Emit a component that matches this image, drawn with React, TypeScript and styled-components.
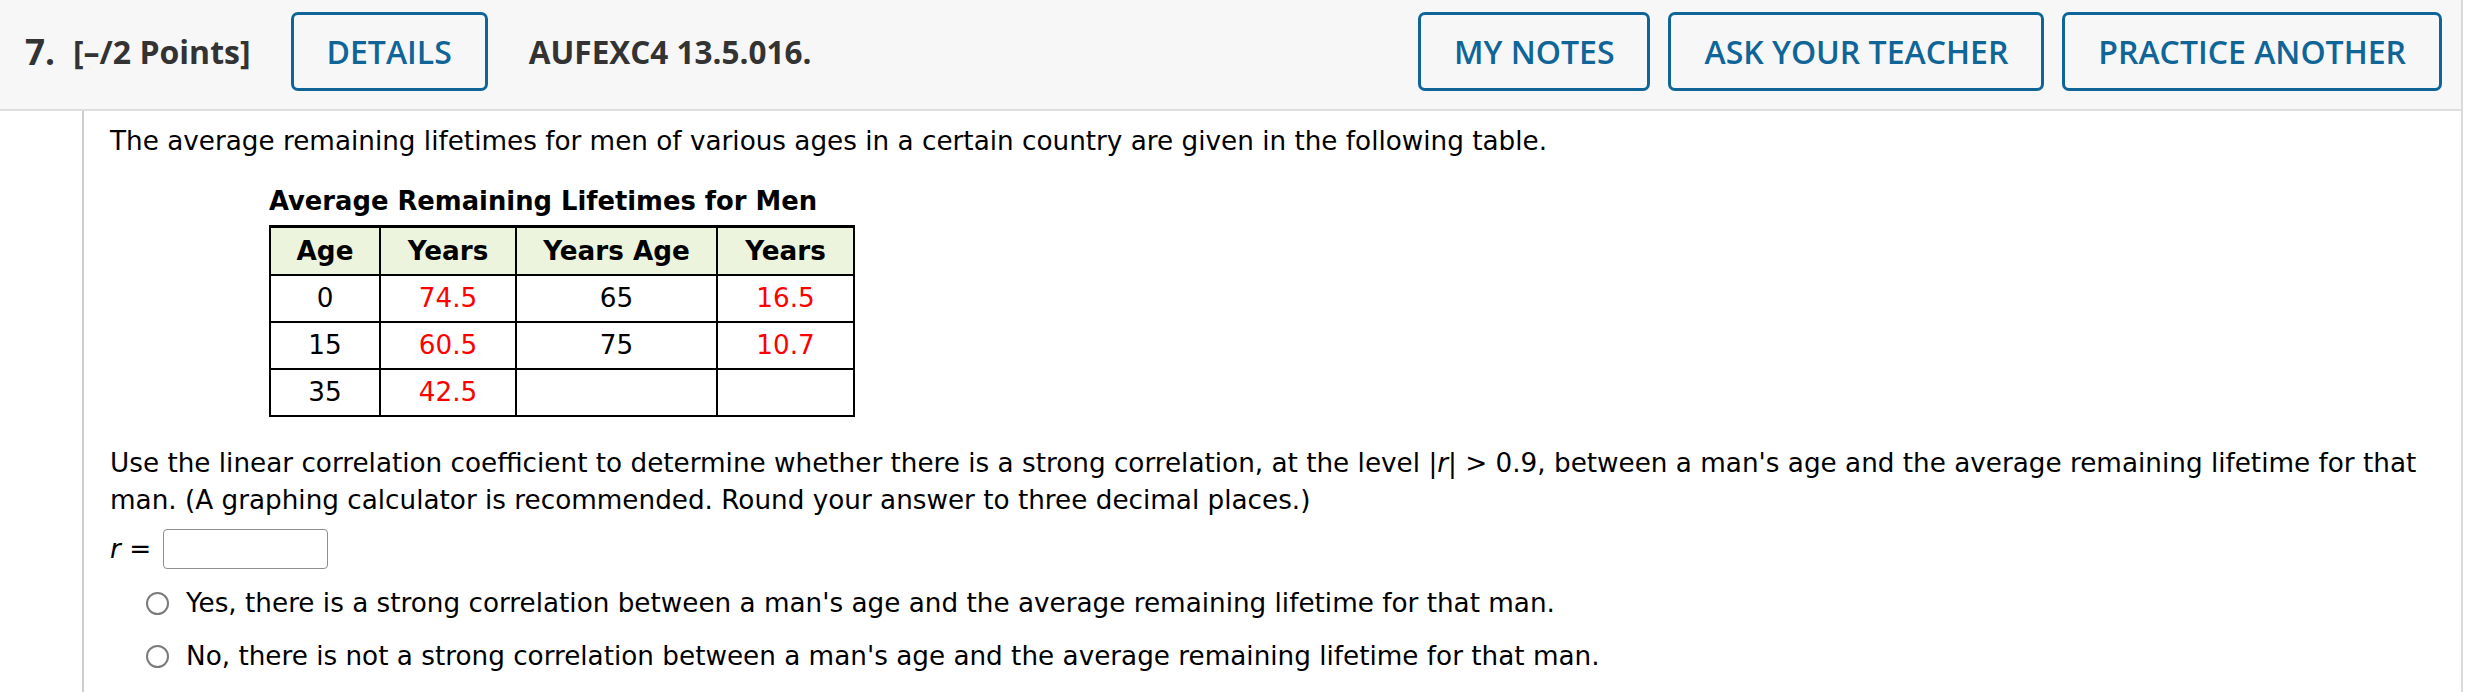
import styled, { createGlobalStyle } from "styled-components";

const GlobalStyle = createGlobalStyle`
  html, body {
    margin: 0;
    padding: 0;
    background: #ffffff;
  }
  body {
    font-family: "DejaVu Sans", Verdana, sans-serif;
  }
`;

const Question = styled.section`
  width: 2463px;
  height: 692px;
  box-sizing: border-box;
  border-right: 2px solid #dadada;
  display: flex;
  flex-direction: column;
`;

const Header = styled.header`
  height: 111px;
  box-sizing: border-box;
  padding: 12px 19px 0 25px;
  display: flex;
  align-items: flex-start;
  background: #f7f7f7;
  border-bottom: 2px solid #dedede;
  font-family: "Open Sans", sans-serif;
  color: #333333;
`;

const Number = styled.span`
  font-size: 35px;
  font-weight: 700;
  line-height: 79px;
  margin-right: 18px;
`;

const Points = styled.span`
  font-size: 32px;
  font-weight: 700;
  line-height: 79px;
  margin-right: 40px;
`;

const Code = styled.span`
  font-size: 31.5px;
  font-weight: 700;
  line-height: 79px;
  margin-left: 41px;
`;

const Actions = styled.div`
  margin-left: auto;
  display: flex;
  gap: 18px;
`;

const HeaderButton = styled.button`
  height: 79px;
  padding: 0 33px;
  border: 3px solid #0f6597;
  border-radius: 7px;
  background: transparent;
  color: #0f6597;
  font-family: "Open Sans", sans-serif;
  font-size: 32px;
  font-weight: 600;
  white-space: nowrap;
`;

const Body = styled.div`
  flex: 1;
  margin-left: 82px;
  border-left: 2px solid #cdcdcd;
  padding: 12px 20px 0 26px;
  font-size: 26.25px;
  line-height: 37px;
  color: #000000;
`;

const Text = styled.p`
  margin: 0;
`;

const Caption = styled.div`
  margin: 23px 0 5px 159px;
  font-size: 25.8px;
  font-weight: 700;
`;

const DataTable = styled.table`
  margin-left: 159px;
  width: 580px;
  table-layout: fixed;
  border-collapse: collapse;
  border: 2px solid #000000;
  border-top-width: 3px;
`;

const HeadCell = styled.th<{ $width: number }>`
  width: ${(p) => p.$width}px;
  height: 46px;
  padding: 0;
  border: 2px solid #000000;
  background: #ecf4de;
  font-weight: 700;
  text-align: center;
`;

const Cell = styled.td<{ $red?: boolean }>`
  height: 45px;
  padding: 0;
  border: 2px solid #000000;
  text-align: center;
  color: ${(p) => (p.$red ? "#ff0000" : "#000000")};
`;

const Prompt = styled(Text)`
  margin-top: 28px;
`;

const AnswerRow = styled.div`
  margin-top: 10px;
  display: flex;
  align-items: center;
  gap: 12px;
`;

const Var = styled.i`
  font-style: italic;
`;

const AnswerBox = styled.input`
  width: 165px;
  height: 40px;
  box-sizing: border-box;
  border: 1.5px solid #8e8e8e;
  border-radius: 4px;
  background: #ffffff;
`;

const Choice = styled.label`
  margin: 16px 0 0 36px;
  display: flex;
  align-items: center;
  gap: 17px;
`;

const Radio = styled.input`
  appearance: none;
  width: 23px;
  height: 23px;
  margin: 0;
  border: 2px solid #7b7b7b;
  border-radius: 50%;
  background: #ffffff;
`;

const columns = [
  { label: "Age", width: 108 },
  { label: "Years", width: 134 },
  { label: "Years Age", width: 199 },
  { label: "Years", width: 135 },
];

const rows = [
  ["0", "74.5", "65", "16.5"],
  ["15", "60.5", "75", "10.7"],
  ["35", "42.5", "", ""],
];

const choices = [
  "Yes, there is a strong correlation between a man's age and the average remaining lifetime for that man.",
  "No, there is not a strong correlation between a man's age and the average remaining lifetime for that man.",
];

export default function App() {
  return (
    <>
      <GlobalStyle />
      <Question>
        <Header>
          <Number>7.</Number>
          <Points>[–/2 Points]</Points>
          <HeaderButton>DETAILS</HeaderButton>
          <Code>AUFEXC4 13.5.016.</Code>
          <Actions>
            <HeaderButton>MY NOTES</HeaderButton>
            <HeaderButton>ASK YOUR TEACHER</HeaderButton>
            <HeaderButton>PRACTICE ANOTHER</HeaderButton>
          </Actions>
        </Header>
        <Body>
          <Text>
            The average remaining lifetimes for men of various ages in a certain country are
            given in the following table.
          </Text>
          <Caption>Average Remaining Lifetimes for Men</Caption>
          <DataTable>
            <thead>
              <tr>
                {columns.map((c, i) => (
                  <HeadCell key={i} $width={c.width}>
                    {c.label}
                  </HeadCell>
                ))}
              </tr>
            </thead>
            <tbody>
              {rows.map((r, i) => (
                <tr key={i}>
                  {r.map((v, j) => (
                    <Cell key={j} $red={j % 2 === 1}>
                      {v}
                    </Cell>
                  ))}
                </tr>
              ))}
            </tbody>
          </DataTable>
          <Prompt>
            Use the linear correlation coefficient to determine whether there is a strong
            correlation, at the level |<Var>r</Var>| &gt; 0.9, between a man's age and the average
            remaining lifetime for that man. (A graphing calculator is recommended. Round your
            answer to three decimal places.)
          </Prompt>
          <AnswerRow>
            <span>
              <Var>r</Var> =
            </span>
            <AnswerBox type="text" />
          </AnswerRow>
          {choices.map((c, i) => (
            <Choice key={i}>
              <Radio type="radio" name="correlation" />
              {c}
            </Choice>
          ))}
        </Body>
      </Question>
    </>
  );
}
